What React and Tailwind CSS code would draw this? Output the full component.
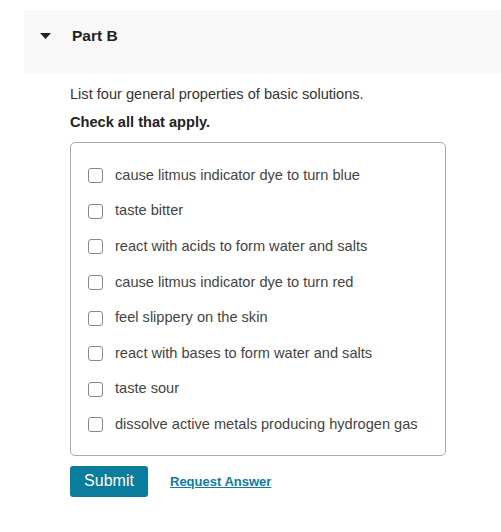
import React, { useState } from 'react';

const options = [
  'cause litmus indicator dye to turn blue',
  'taste bitter',
  'react with acids to form water and salts',
  'cause litmus indicator dye to turn red',
  'feel slippery on the skin',
  'react with bases to form water and salts',
  'taste sour',
  'dissolve active metals producing hydrogen gas',
];

const App = () => {
  const [checked, setChecked] = useState({});

  return (
    <div className="w-[501px] h-[532px] bg-white pt-[10px] font-['Liberation_Sans',Arial,sans-serif]">
      <div className="ml-[24px] h-[63px] bg-[#f8f8f8] flex items-start pt-[16px]">
        <svg className="ml-[16px] mt-[7px]" width="11" height="6" viewBox="0 0 11 6">
          <polygon points="0,0 11,0 5.5,6" fill="#222" />
        </svg>
        <span className="ml-[21px] text-[15.5px] leading-[20px] font-bold text-[#222]">Part B</span>
      </div>
      <div className="pl-[70px] pt-[11px]">
        <p className="text-[14.6px] leading-[20px] text-[#333]">List four general properties of basic solutions.</p>
        <p className="mt-[8px] text-[14.6px] leading-[20px] font-bold text-[#222]">Check all that apply.</p>
        <div className="mt-[10px] w-[376px] border border-[#aaa] rounded-[5px] pt-[15px] pb-[12px] pl-[17px]">
          {options.map((o, i) => (
            <label key={i} className="flex items-center h-[35.6px] cursor-pointer">
              <input
                type="checkbox"
                checked={!!checked[i]}
                onChange={e => setChecked({ ...checked, [i]: e.target.checked })}
                className="appearance-none w-[15px] h-[15px] border border-[#888] rounded-[3px] bg-white checked:bg-[#0a7c9c]"
              />
              <span className="ml-[12px] text-[14.6px] text-[#444]">{o}</span>
            </label>
          ))}
        </div>
        <div className="mt-[10px] flex items-center">
          <button className="w-[78px] h-[31px] rounded-[3px] bg-[#0a7c9c] text-white text-[16px]">Submit</button>
          <a href="#" className="ml-[22px] text-[13px] font-bold text-[#0e7aa6] underline">Request Answer</a>
        </div>
      </div>
    </div>
  );
};

export default App;
